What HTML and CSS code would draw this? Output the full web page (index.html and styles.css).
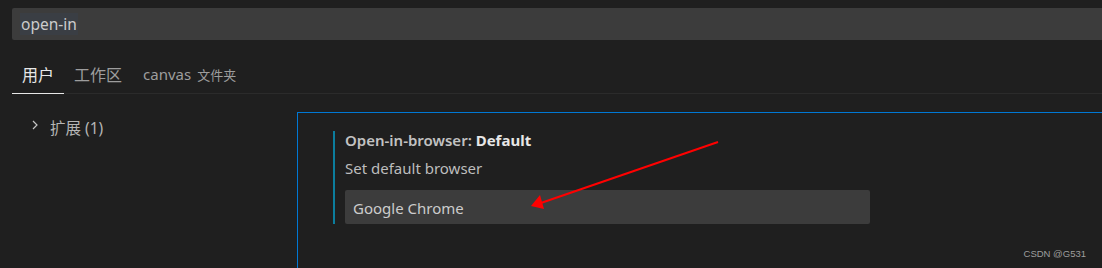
FILE: index.html
```html
<!DOCTYPE html>
<html lang="zh">
<head>
<meta charset="utf-8">
<title>Settings</title>
<link rel="stylesheet" href="styles.css">
</head>
<body>
<div class="search"><span class="query">open-in</span></div>
<div class="tabs">
  <div class="tab active">用户</div>
  <div class="tab">工作区</div>
  <div class="tab folder"><span class="name">canvas</span><span class="sub">文件夹</span></div>
</div>
<div class="main">
  <div class="toc">
    <div class="toc-item">
      <svg class="chev" width="6" height="10" viewBox="0 0 6 10"><path d="M1 1 L5 5 L1 9" fill="none" stroke="#c5c5c5" stroke-width="1.2"/></svg>
      <span>扩展 (1)</span>
    </div>
  </div>
  <div class="panel">
    <div class="setting">
      <div class="title"><span class="cat">Open-in-browser: </span><span class="key">Default</span></div>
      <div class="desc">Set default browser</div>
      <div class="select">Google Chrome</div>
    </div>
  </div>
</div>
<svg class="arrow" width="1102" height="268" viewBox="0 0 1102 268">
  <line x1="718" y1="142" x2="538" y2="204" stroke="#ff0000" stroke-width="2"/>
  <polygon points="531,206 540,195 544,209" fill="#ff0000"/>
</svg>
<div class="watermark">CSDN @G531</div>
</body>
</html>
```
FILE: styles.css
```css
html, body {
  margin: 0;
  padding: 0;
}
body {
  width: 1102px;
  height: 268px;
  overflow: hidden;
  position: relative;
  background: #1f1f1f;
  font-family: "Noto Sans", "Noto Sans CJK SC", sans-serif;
  color: #cccccc;
}
.search {
  margin: 8px -4px 0 12px;
  height: 32px;
  background: #3c3c3c;
  border-radius: 2px;
  display: flex;
  align-items: center;
  padding-left: 8px;
  font-size: 15.5px;
  color: #cccccc;
}
.query {
  background: #3a3e44;
  line-height: 22px;
  padding: 0 1px;
}
.tabs {
  display: flex;
  margin-left: 12px;
  padding-top: 17px;
  border-bottom: 1px solid #2b2b2b;
}
.tab {
  height: 34px;
  display: flex;
  align-items: center;
  padding: 0 10px 2px;
  margin-bottom: -1px;
  border-bottom: 1px solid transparent;
  font-size: 16px;
  color: #9d9d9d;
}
.tab.active {
  color: #e7e7e7;
  border-bottom-color: #e7e7e7;
}
.tab.folder {
  padding-left: 11px;
  gap: 6px;
}
.tab .name {
  font-size: 15px;
}
.tab .sub {
  font-size: 13px;
}
.main {
  display: flex;
  margin-top: 18px;
}
.toc {
  width: 297px;
  flex-shrink: 0;
}
.toc-item {
  display: flex;
  align-items: center;
  height: 30px;
  padding-left: 32px;
  gap: 12px;
  font-size: 15.5px;
  color: #b5b5b5;
}
.chev {
  margin-top: -4px;
}
.panel {
  flex: 1;
  height: 156px;
  box-sizing: border-box;
  border-top: 1px solid #0078d4;
  border-left: 1px solid #0078d4;
  padding: 18px 0 0 35px;
}
.setting {
  border-left: 2px solid #0c7d9d;
  padding-left: 10px;
}
.title {
  font-size: 15px;
  line-height: 18px;
  font-weight: 600;
}
.title .cat {
  color: #c2c2c2;
}
.title .key {
  color: #e7e7e7;
  font-weight: 700;
}
.desc {
  margin-top: 10px;
  font-size: 15px;
  line-height: 19px;
  color: #bdbdbd;
}
.select {
  margin-top: 12px;
  width: 525px;
  height: 34px;
  box-sizing: border-box;
  background: #3c3c3c;
  border-radius: 2px;
  padding: 2px 0 0 8px;
  display: flex;
  align-items: center;
  font-size: 15px;
  color: #cccccc;
}
.arrow {
  position: absolute;
  left: 0;
  top: 0;
  pointer-events: none;
}
.watermark {
  position: absolute;
  right: 16px;
  bottom: 9px;
  font-family: "Liberation Sans", sans-serif;
  font-size: 9.5px;
  color: #9e9e9e;
}
```
